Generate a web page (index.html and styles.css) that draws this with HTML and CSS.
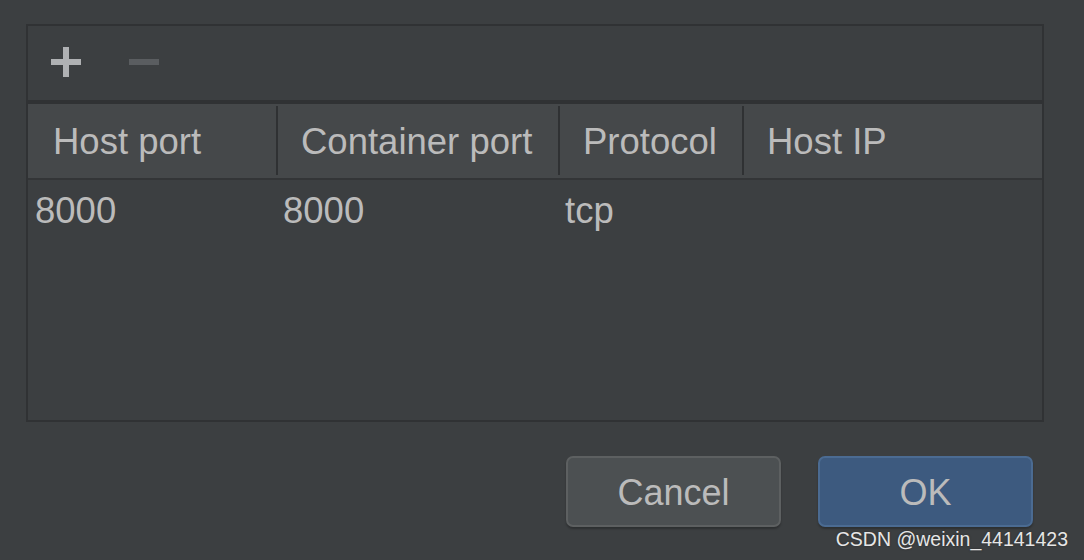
FILE: index.html
```html
<!DOCTYPE html>
<html>
<head>
<meta charset="utf-8">
<link rel="stylesheet" href="styles.css">
</head>
<body>
<div class="dialog">
  <div class="panel">
    <div class="toolbar">
      <svg class="icon" width="30" height="30" viewBox="0 0 30 30"><rect x="12" y="0" width="6" height="30" fill="#afb1b3"/><rect x="0" y="12" width="30" height="6" fill="#afb1b3"/></svg>
      <svg class="icon minus" width="30" height="30" viewBox="0 0 30 30"><rect x="0" y="12" width="30" height="6" fill="#5a5d60"/></svg>
    </div>
    <div class="thead">
      <div class="th c1">Host port</div>
      <div class="th c2">Container port</div>
      <div class="th c3">Protocol</div>
      <div class="th c4">Host IP</div>
    </div>
    <div class="row">
      <div class="td c1">8000</div>
      <div class="td c2">8000</div>
      <div class="td c3">tcp</div>
      <div class="td c4"></div>
    </div>
  </div>
  <div class="buttons">
    <button class="btn cancel">Cancel</button>
    <button class="btn ok">OK</button>
  </div>
  <div class="watermark">CSDN @weixin_44141423</div>
</div>
</body>
</html>
```
FILE: styles.css
```css
html, body {
  margin: 0;
  padding: 0;
  background: #3c3f41;
  width: 1084px;
  height: 560px;
  overflow: hidden;
  font-family: "Liberation Sans", Arial, sans-serif;
  color: #bbbbbb;
}
.dialog {
  position: relative;
  width: 1084px;
  height: 560px;
  padding-top: 24px;
  box-sizing: border-box;
}
.panel {
  margin-left: 26px;
  width: 1018px;
  height: 398px;
  box-sizing: border-box;
  border: 2px solid #303234;
  background: #3c3f41;
}
.toolbar {
  height: 78px;
  box-sizing: border-box;
  border-bottom: 4px solid #303234;
  display: flex;
  align-items: flex-start;
  padding-left: 23px;
  padding-top: 21px;
  gap: 48px;
}
.thead, .row {
  display: grid;
  grid-template-columns: 250px 282px 184px 1fr;
}
.thead {
  height: 76px;
  box-sizing: border-box;
  background: #45484a;
  border-bottom: 2px solid #333537;
  padding-top: 2px;
  padding-bottom: 3px;
}
.th {
  font-size: 36.5px;
  line-height: 71px;
  padding-left: 23px;
  white-space: nowrap;
  height: 69px;
}
.th.c1 { padding-left: 25px; border-right: 2px solid #2f3133; }
.th.c2, .th.c3 { border-right: 2px solid #2f3133; }
.td {
  font-size: 36.5px;
  line-height: 62px;
  padding-left: 5px;
}
.td.c1 { padding-left: 7px; }
.buttons {
  display: flex;
  justify-content: flex-end;
  gap: 37px;
  padding-right: 51px;
  margin-top: 34px;
}
.btn {
  width: 215px;
  height: 71px;
  border-radius: 7px;
  font-family: "Liberation Sans", Arial, sans-serif;
  font-size: 36px;
  color: #bbbbbb;
  padding: 3px 0 0 0;
  box-sizing: border-box;
}
.cancel {
  background: #4c5052;
  border: 2px solid #5d6061;
  box-shadow: 0 2px 2px rgba(0,0,0,0.25);
}
.ok {
  background: #3d5a7f;
  border: 2px solid #4b6b92;
  box-shadow: 0 2px 2px rgba(0,0,0,0.25);
}
.watermark {
  position: absolute;
  right: 16px;
  bottom: 9px;
  font-size: 19.5px;
  color: #e6e6e6;
  text-shadow: 0 0 2px #2a2a2a;
  white-space: nowrap;
}
```
